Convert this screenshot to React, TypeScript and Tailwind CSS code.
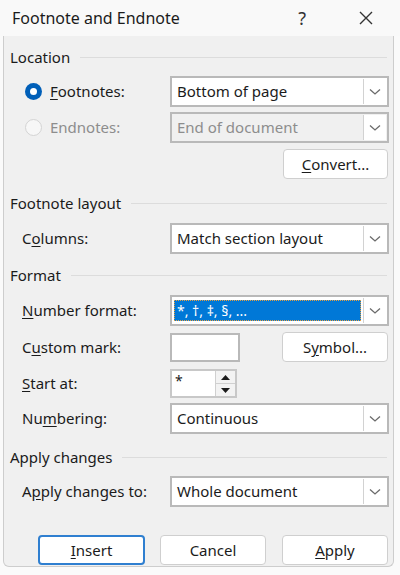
import React from 'react';

const font = { fontFamily: '"Noto Sans", "Open Sans", sans-serif' };

const Chevron = () => (
  <svg width="12" height="8" viewBox="0 0 12 8" fill="none">
    <path d="M1 1.5 L6 6 L11 1.5" stroke="#6b6b6b" strokeWidth="1.3" />
  </svg>
);

const Select = ({ value, disabled = false, selected = false }: { value: string; disabled?: boolean; selected?: boolean }) => (
  <div
    className={`flex h-[31px] w-[219px] items-stretch border-2 border-[#b9b9b9] ${disabled ? 'bg-[#f0f0f0]' : 'bg-white'}`}
  >
    <div className="flex flex-1 items-center px-[2px]">
      {selected ? (
        <div className="flex h-[21px] w-full items-center border border-dotted border-[#e8a040] bg-[#0078d7] px-[2px] text-[14px] text-white">
          {value}
        </div>
      ) : (
        <span className={`pl-[3px] ${disabled ? 'text-[#8d8d8d]' : 'text-[#1b1b1b]'}`}>{value}</span>
      )}
    </div>
    <div className="my-[1px] mr-[1px] flex w-[23px] items-center justify-center border-l border-[#d2d2d2] bg-white">
      <Chevron />
    </div>
  </div>
);

const Btn = ({ children, primary = false, w = 'w-[106px]' }: { children: React.ReactNode; primary?: boolean; w?: string }) => (
  <div
    className={`flex h-[30px] ${w} items-center justify-center rounded-[4px] bg-white text-[15px] text-[#1b1b1b] ${
      primary ? 'border-2 border-[#2f7fd0]' : 'border border-[#cfcfcf]'
    }`}
  >
    {children}
  </div>
);

const Header = ({ title }: { title: string }) => (
  <div className="flex h-[20px] items-center pl-[6px] pr-[6px]">
    <span className="text-[15px] text-[#1b1b1b]">{title}</span>
    <div className="ml-[10px] h-px flex-1 bg-[#dcdcdc]" />
  </div>
);

const Label = ({ children }: { children: React.ReactNode }) => (
  <div className="w-[166px] shrink-0 pl-[18px] text-[15px] text-[#1b1b1b]">{children}</div>
);

const U = ({ c }: { c: string }) => <span className="underline underline-offset-2">{c}</span>;

export default function App() {
  return (
    <div className="flex h-[575px] w-[400px] flex-col overflow-hidden bg-[#fafafa] text-[15px]" style={font}>
      <div className="flex h-[36px] shrink-0 items-center bg-[#f9f9f9] pl-[12px]">
        <span className="text-[16px] text-[#1b1b1b]">Footnote and Endnote</span>
        <span className="ml-auto mr-[52px] text-[18px] text-[#333]">?</span>
        <svg width="16" height="16" viewBox="0 0 16 16" className="mr-[26px]">
          <path d="M2 2 L14 14 M14 2 L2 14" stroke="#333" strokeWidth="1.4" />
        </svg>
      </div>

      <div className="ml-[3px] flex h-[531px] w-[391px] flex-col rounded-b-[6px] border-x border-b border-[#cdcdcd] bg-[#f0f0f0]">
        <div className="mt-[11px]">
          <Header title="Location" />
        </div>

        <div className="mt-[9px] flex items-center">
          <div className="flex w-[166px] shrink-0 items-center pl-[21px]">
            <div className="flex h-[17px] w-[17px] items-center justify-center rounded-full bg-[#005fb8]">
              <div className="h-[7px] w-[7px] rounded-full bg-white" />
            </div>
            <span className="ml-[8px] text-[#1b1b1b]">
              <U c="F" />ootnotes:
            </span>
          </div>
          <Select value="Bottom of page" />
        </div>

        <div className="mt-[5px] flex items-center">
          <div className="flex w-[166px] shrink-0 items-center pl-[21px]">
            <div className="h-[17px] w-[17px] rounded-full border border-[#d4d4d4] bg-[#f7f7f7]" />
            <span className="ml-[8px] text-[#8d8d8d]">Endnotes:</span>
          </div>
          <Select value="End of document" disabled />
        </div>

        <div className="mt-[6px] flex justify-end pr-[5px]">
          <Btn w="w-[105px]">
            <span>
              <U c="C" />onvert...
            </span>
          </Btn>
        </div>

        <div className="mt-[14px]">
          <Header title="Footnote layout" />
        </div>

        <div className="mt-[10px] flex items-center">
          <Label>
            C<U c="o" />lumns:
          </Label>
          <Select value="Match section layout" />
        </div>

        <div className="mt-[11px]">
          <Header title="Format" />
        </div>

        <div className="mt-[10px] flex items-center">
          <Label>
            <U c="N" />umber format:
          </Label>
          <Select value="*, †, ‡, §, ..." selected />
        </div>

        <div className="mt-[6px] flex items-center">
          <Label>
            C<U c="u" />stom mark:
          </Label>
          <div className="h-[29px] w-[70px] border-2 border-[#b9b9b9] bg-white" />
          <div className="ml-auto mr-[5px]">
            <Btn>
              <span>
                S<U c="y" />mbol...
              </span>
            </Btn>
          </div>
        </div>

        <div className="mt-[7px] flex items-center">
          <Label>
            <U c="S" />tart at:
          </Label>
          <div className="flex h-[29px] w-[67px] border-2 border-[#c8c8c8] bg-white">
            <div className="flex-1 pl-[3px] pt-[3px] text-[14px] leading-[14px] text-[#1b1b1b]">*</div>
            <div className="flex w-[20px] flex-col border-l border-[#d0d0d0] bg-[#f3f3f3]">
              <div className="flex flex-1 items-center justify-center border-b border-[#d0d0d0]">
                <svg width="9" height="5" viewBox="0 0 9 5">
                  <path d="M0 5 L4.5 0 L9 5 Z" fill="#1b1b1b" />
                </svg>
              </div>
              <div className="flex flex-1 items-center justify-center">
                <svg width="9" height="5" viewBox="0 0 9 5">
                  <path d="M0 0 L4.5 5 L9 0 Z" fill="#1b1b1b" />
                </svg>
              </div>
            </div>
          </div>
        </div>

        <div className="mt-[5px] flex items-center">
          <Label>
            Nu<U c="m" />bering:
          </Label>
          <Select value="Continuous" />
        </div>

        <div className="mt-[13px]">
          <Header title="Apply changes" />
        </div>

        <div className="mt-[9px] flex items-center">
          <Label>
            A<U c="p" />ply changes to:
          </Label>
          <Select value="Whole document" />
        </div>

        <div className="mt-[28px] flex items-center pl-[34px] pr-[5px]">
          <Btn primary w="w-[107px]">
            <span>
              <U c="I" />nsert
            </span>
          </Btn>
          <div className="ml-[15px]">
            <Btn>Cancel</Btn>
          </div>
          <div className="ml-auto">
            <Btn>
              <span>
                <U c="A" />pply
              </span>
            </Btn>
          </div>
        </div>
      </div>
    </div>
  );
}
